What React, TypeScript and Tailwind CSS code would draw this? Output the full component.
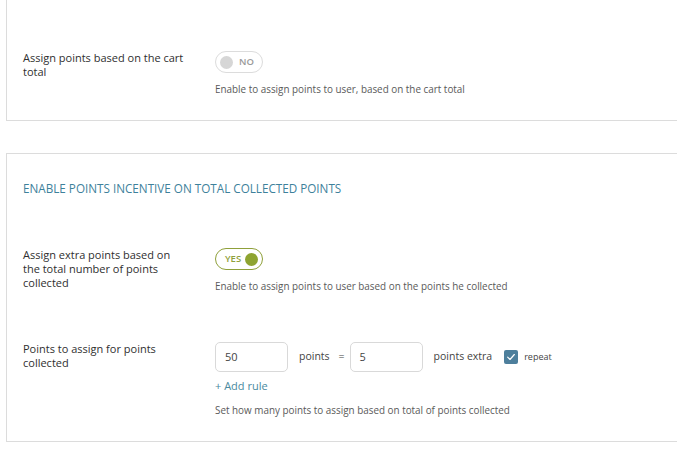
import React from "react";

const font = { fontFamily: '"Open Sans", "Segoe UI", sans-serif' };

function Toggle({ on }: { on: boolean }) {
  if (on) {
    return (
      <div className="flex h-[22px] w-[48px] items-center justify-between rounded-full border border-[#8fa03a] bg-white pl-[9px] pr-[4px]">
        <span className="text-[9.5px] font-semibold leading-none text-[#8fa03a]">YES</span>
        <span className="h-[13px] w-[13px] rounded-full bg-[#8ea431]" />
      </div>
    );
  }
  return (
    <div className="flex h-[22px] w-[48px] items-center gap-[6px] rounded-full border border-[#dcdcdc] bg-white pl-[4px]">
      <span className="h-[13px] w-[13px] rounded-full bg-[#d6d6d6]" />
      <span className="text-[9.5px] font-semibold leading-none text-[#9a9a9a]">NO</span>
    </div>
  );
}

function Row({
  label,
  children,
}: {
  label: React.ReactNode;
  children: React.ReactNode;
}) {
  return (
    <div className="flex">
      <div className="w-[208px] shrink-0 pl-[16px] pr-[30px] text-[11px] leading-[14px] text-[#2f2f2f]">
        {label}
      </div>
      <div className="flex flex-col">{children}</div>
    </div>
  );
}

function Desc({ children }: { children: React.ReactNode }) {
  return <p className="text-[9.9px] leading-[12px] text-[#5a5a5a]">{children}</p>;
}

function NumInput({ value }: { value: string }) {
  return (
    <div className="flex h-[30px] w-[73px] items-center rounded-[5px] border border-[#d9d9d9] bg-white pl-[9px] text-[11px] text-[#444]">
      {value}
    </div>
  );
}

export default function App() {
  return (
    <div className="h-[452px] w-[677px] overflow-hidden bg-white" style={font}>
      <div className="ml-[6px] mt-[-20px] w-[720px] border border-[#dcdcdc] bg-white pb-[25px] pt-[70px]">
        <Row label="Assign points based on the cart total">
          <Toggle on={false} />
          <div className="mt-[10px]">
            <Desc>Enable to assign points to user, based on the cart total</Desc>
          </div>
        </Row>
      </div>

      <div className="ml-[6px] mt-[32px] w-[720px] border border-[#dcdcdc] bg-white pb-[25px] pt-[26px]">
        <h2 className="pl-[16px] text-[11.7px] leading-[16px] text-[#3d819b]">
          ENABLE POINTS INCENTIVE ON TOTAL COLLECTED POINTS
        </h2>

        <div className="mt-[52px]">
          <Row label="Assign extra points based on the total number of points collected">
            <Toggle on />
            <div className="mt-[10px]">
              <Desc>Enable to assign points to user based on the points he collected</Desc>
            </div>
          </Row>
        </div>

        <div className="mt-[50px]">
          <Row label="Points to assign for points collected">
            <div className="flex items-center">
              <NumInput value="50" />
              <span className="ml-[11px] text-[10.5px] text-[#444]">points</span>
              <span className="ml-[9px] text-[10.5px] text-[#444]">=</span>
              <div className="ml-[5px]">
                <NumInput value="5" />
              </div>
              <span className="ml-[11px] text-[10.5px] text-[#444]">points extra</span>
              <span className="ml-[12px] flex h-[14px] w-[14px] items-center justify-center rounded-[2px] bg-[#4d7f9c]">
                <svg viewBox="0 0 12 12" className="h-[10px] w-[10px]" fill="none">
                  <path d="M2 6.2 L4.8 9 L10 3" stroke="white" strokeWidth="1.4" strokeLinecap="round" strokeLinejoin="round" />
                </svg>
              </span>
              <span className="ml-[6px] text-[9px] text-[#444]">repeat</span>
            </div>
            <a className="mt-[7px] text-[11px] leading-[14px] text-[#4a8aa0]">+ Add rule</a>
            <div className="mt-[11px]">
              <Desc>Set how many points to assign based on total of points collected</Desc>
            </div>
          </Row>
        </div>
      </div>
    </div>
  );
}
